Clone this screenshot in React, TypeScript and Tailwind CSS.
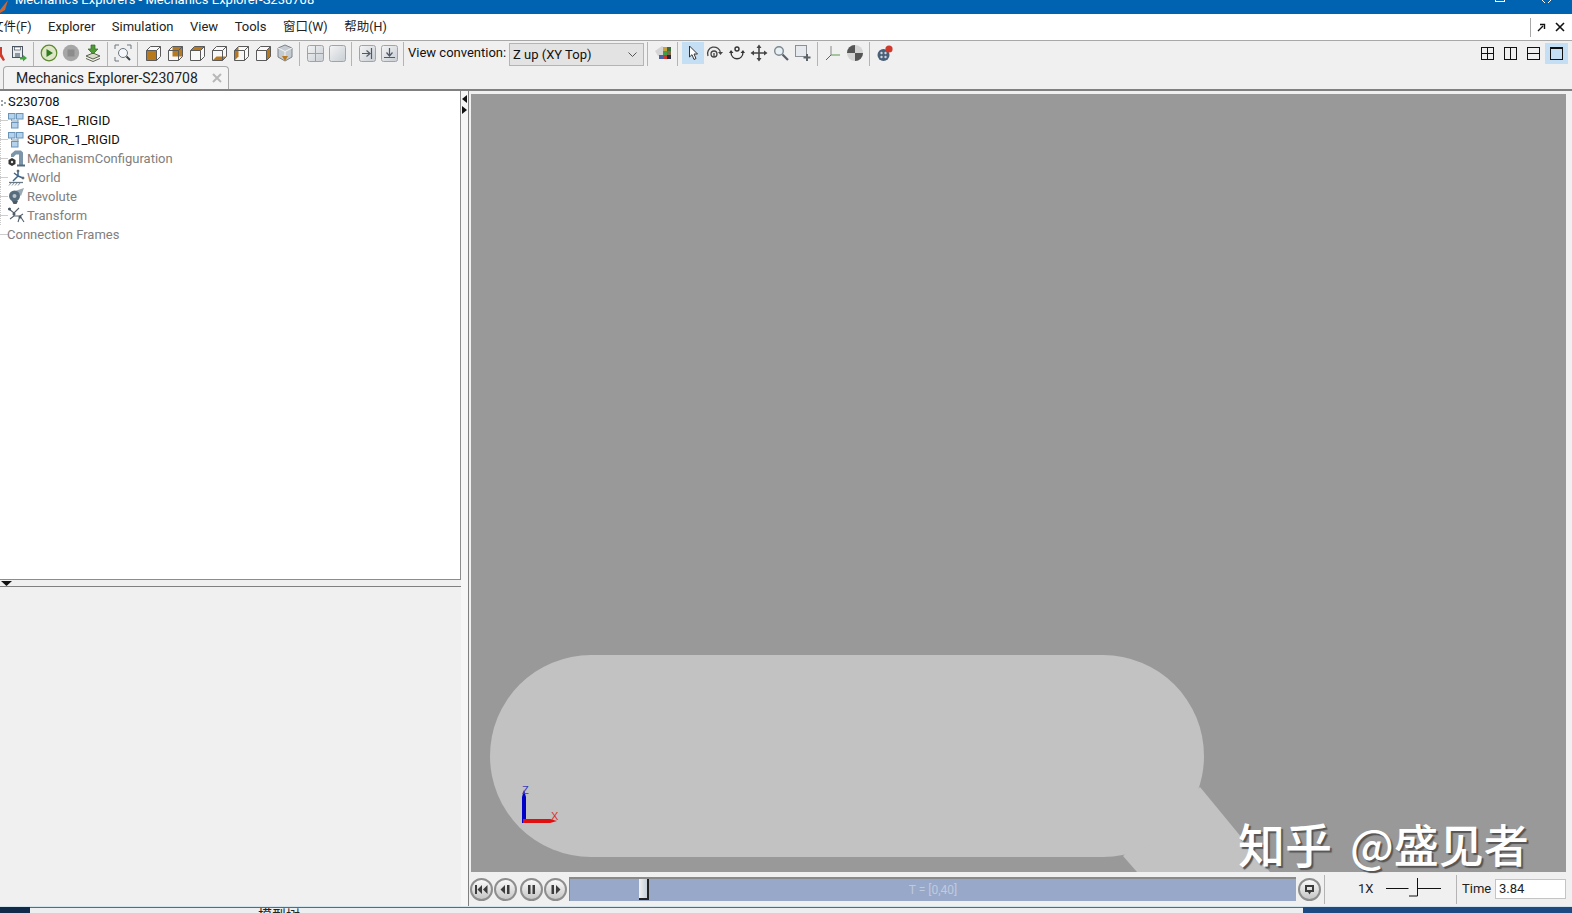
import React from 'react';

const UI_FONT = "font-['Roboto','Noto_Sans_CJK_SC',sans-serif]";

function Sep() {
  return (
    <div className="w-[8px] h-[24px] flex-none pl-[3px]">
      <div className="w-px h-full bg-[#b4b4b4]" />
    </div>
  );
}

function Btn({ children, active }: { children?: React.ReactNode; active?: boolean }) {
  return (
    <div className={`w-[22px] h-[22px] flex-none flex items-center justify-center ${active ? 'bg-[#c4def3]' : ''}`}>
      {children}
    </div>
  );
}

function Cube({ face }: { face: string }) {
  // face: which side of the box is filled brown
  const brown = '#b8791c';
  return (
    <svg width="17" height="17" viewBox="0 0 17 17" fill="none">
      <path d="M1.5 5.5 L5.5 1.5 H15.5 V11.5 L11.5 15.5 H1.5 Z" fill="#f8f8f8" />
      {face === 'front' && <path d="M1.5 5.5 H11.5 V15.5 H1.5 Z" fill={brown} />}
      {face === 'back' && <path d="M5.5 1.5 H15.5 V11.5 H5.5 Z" fill={brown} />}
      {face === 'top' && <path d="M1.5 5.5 L5.5 1.5 H15.5 L11.5 5.5 Z" fill={brown} />}
      {face === 'bottom' && <path d="M1.5 15.5 L5.5 11.5 H15.5 L11.5 15.5 Z" fill={brown} />}
      {face === 'left' && <path d="M1.5 5.5 L5.5 1.5 V11.5 L1.5 15.5 Z" fill={brown} />}
      {face === 'right' && <path d="M11.5 5.5 L15.5 1.5 V11.5 L11.5 15.5 Z" fill={brown} />}
      <path d="M1.5 5.5 L5.5 1.5 H15.5 V11.5 L11.5 15.5 H1.5 Z M1.5 5.5 H11.5 V15.5 M11.5 5.5 L15.5 1.5" stroke="#5a5a5a" />
    </svg>
  );
}

function PlainSquare({ children }: { children?: React.ReactNode }) {
  return (
    <svg width="17" height="17" viewBox="0 0 17 17" fill="none">
      <defs>
        <linearGradient id="sq" x1="0" y1="0" x2="1" y2="1">
          <stop offset="0" stopColor="#f4f4f4" />
          <stop offset="1" stopColor="#c8ced4" />
        </linearGradient>
      </defs>
      <rect x="0.5" y="0.5" width="16" height="16" rx="2" fill="url(#sq)" stroke="#a0a4a8" />
      {children}
    </svg>
  );
}

function LayoutIcon({ v, h, active }: { v?: boolean; h?: boolean; active?: boolean }) {
  return (
    <div className={`w-[23px] h-[21px] flex items-center justify-center ${active ? 'bg-[#c4def3]' : ''}`}>
      <svg width="13" height="13" viewBox="0 0 13 13" fill="none" stroke="#111" strokeWidth="1">
        <rect x="0.5" y="0.5" width="12" height="12" />
        {active && <path d="M0.5 1.5 H12.5" />}
        {v && <path d="M6.5 0.5 V12.5" />}
        {h && <path d="M0.5 6.5 H12.5" />}
      </svg>
    </div>
  );
}

function RoundBtn({ children, className }: { children: React.ReactNode; className?: string }) {
  return (
    <div className={`w-[23px] h-[23px] flex-none rounded-full border-2 border-[#8e8e8e] bg-gradient-to-b from-[#fafafa] to-[#c6c6c6] flex items-center justify-center ${className ?? ''}`}>
      <svg width="13" height="11" viewBox="0 0 13 11" fill="#3c3c3c">{children}</svg>
    </div>
  );
}

function Connector({ last }: { last?: boolean }) {
  return (
    <svg width="8" height="19" viewBox="0 0 8 19" className="flex-none" fill="none">
      <path d="M0.5 9.5 H8" stroke="#9a9a9a" strokeDasharray="1 1" />
      {!last && <path d="M0.5 0 V19" stroke="#c8c8c8" strokeDasharray="1 1" />}
    </svg>
  );
}

function BodyIcon() {
  return (
    <svg width="18" height="17" viewBox="0 0 18 17" className="flex-none" fill="#b4d2ec" stroke="#6a94b8">
      <path d="M3.5 7 V9 H10 M10 7.5 V11" fill="none" stroke="#8a9aa8" />
      <rect x="0.5" y="1.5" width="6.5" height="5.5" />
      <rect x="8.5" y="1.5" width="6.5" height="5.5" />
      <rect x="3.5" y="10.5" width="6.5" height="5.5" />
    </svg>
  );
}

function RobotIcon() {
  return (
    <svg width="18" height="17" viewBox="0 0 18 17" className="flex-none" fill="none">
      <path d="M3 7 V4 L7 0.5 H13 L15 2.5 V15 H11 V4.5 H8 L5.5 7 Z" fill="#7d95a8" />
      <path d="M9 15.5 H17" stroke="#55697a" strokeWidth="2" />
      <path d="M4 8 L7.5 10 L7.5 14 L4 16 L0.5 14 V10 Z" fill="#333" />
      <circle cx="4" cy="12" r="1.2" fill="#e8e8e8" />
    </svg>
  );
}

function WorldIcon() {
  return (
    <svg width="18" height="17" viewBox="0 0 18 17" className="flex-none" fill="none" stroke="#6a7884">
      <path d="M1 13.5 H15" strokeWidth="1.3" />
      <path d="M1 16.5 L3 14 M4 16.5 L6 14 M7 16.5 L9 14 M10 16.5 L12 14" strokeWidth="0.8" />
      <path d="M5 12 L10 7 V1 M10 7 L15 9 M10 7 L6 4" stroke="#3f6488" strokeWidth="1.5" />
      <circle cx="10" cy="2" r="1" fill="#2d2d2d" />
      <circle cx="15" cy="9" r="1" fill="#2d2d2d" />
    </svg>
  );
}

function RevoluteIcon() {
  return (
    <svg width="18" height="17" viewBox="0 0 18 17" className="flex-none" fill="none">
      <path d="M7 3 L16 0 L13 8 Z" fill="#98a8b4" />
      <circle cx="6.5" cy="8" r="5.5" fill="#566c7c" />
      <circle cx="6.5" cy="8" r="2" fill="#b9c4cc" />
      <path d="M4 13 H10 L8.5 16 H5.5 Z" fill="#4f5a62" />
    </svg>
  );
}

function TransformIcon() {
  return (
    <svg width="18" height="17" viewBox="0 0 18 17" className="flex-none" fill="none" stroke="#52606c" strokeWidth="1.1">
      <path d="M1 2 L6 6 L11 1 M6 6 V9 L2 12 M6 9 H12 L15 7 M12 9 L10 15 M12 9 L16 15" />
      <circle cx="1.5" cy="2" r="1" fill="#222" />
      <circle cx="6" cy="7" r="1" fill="#222" />
      <circle cx="12" cy="10" r="1" fill="#222" />
    </svg>
  );
}

const treeRows = [
  { name: 'BASE_1_RIGID', icon: <BodyIcon />, dim: false },
  { name: 'SUPOR_1_RIGID', icon: <BodyIcon />, dim: false },
  { name: 'MechanismConfiguration', icon: <RobotIcon />, dim: true },
  { name: 'World', icon: <WorldIcon />, dim: true },
  { name: 'Revolute', icon: <RevoluteIcon />, dim: true },
  { name: 'Transform', icon: <TransformIcon />, dim: true },
];

function Toolbar() {
  return (
    <div className="h-[25px] flex-none flex bg-[#f0f0f0] pt-[1px] overflow-hidden">
      <div className="flex items-start -ml-[14px]">
        <Btn>
          <svg width="18" height="18" viewBox="0 0 18 18" fill="none">
            <path d="M6 3 H14 V10 L17 16 L15 17 L11 11" fill="#d03a2a" />
          </svg>
        </Btn>
        <Btn>
          <svg width="17" height="17" viewBox="0 0 17 17" fill="none">
            <rect x="1.5" y="1.5" width="10" height="11" fill="#e8ecef" stroke="#4a5560" />
            <rect x="3.5" y="2" width="6" height="3" fill="#fff" stroke="#4a5560" strokeWidth="0.7" />
            <rect x="4" y="8" width="5" height="4" fill="#8c98a2" />
            <path d="M9 12 H12 V10 L16 13 L12 16.5 V14.5 H9 Z" fill="#3fa43f" />
          </svg>
        </Btn>
        <Sep />
        <Btn>
          <svg width="18" height="18" viewBox="0 0 18 18">
            <circle cx="9" cy="9" r="7.8" fill="#dfe6c8" stroke="#5c8a2c" strokeWidth="1.2" />
            <path d="M6.5 5 L13 9 L6.5 13 Z" fill="#2f7d1f" />
          </svg>
        </Btn>
        <Btn>
          <svg width="18" height="18" viewBox="0 0 18 18">
            <circle cx="9" cy="9" r="8.2" fill="#a6a6a6" />
            <rect x="5.5" y="5.5" width="7" height="7" fill="#8c8c8c" />
          </svg>
        </Btn>
        <Btn>
          <svg width="18" height="18" viewBox="0 0 18 18" fill="none">
            <path d="M2 12 L9 9 L16 12 L9 15 Z" fill="#d8dcc8" stroke="#5b6350" />
            <path d="M2 14.5 L9 17.5 L16 14.5" stroke="#5b6350" />
            <path d="M7 1 H11 V5 H14 L9 10 L4 5 H7 Z" fill="#4f9a35" stroke="#2f6a20" strokeWidth="0.7" />
          </svg>
        </Btn>
        <Sep />
        <Btn>
          <svg width="18" height="18" viewBox="0 0 18 18" fill="none" stroke="#6c7680">
            <circle cx="9" cy="9" r="4.5" fill="#f4f8fa" />
            <path d="M12.5 12.5 L16 16" strokeWidth="2" stroke="#3c444c" />
            <path d="M1 5 V1 H5 M13 1 H17 V5 M1 13 V17 H5" />
          </svg>
        </Btn>
        <Sep />
        <Btn><Cube face="front" /></Btn>
        <Btn><Cube face="back" /></Btn>
        <Btn><Cube face="top" /></Btn>
        <Btn><Cube face="bottom" /></Btn>
        <Btn><Cube face="left" /></Btn>
        <Btn><Cube face="right" /></Btn>
        <Btn>
          <svg width="18" height="18" viewBox="0 0 18 18" fill="none">
            <path d="M2 4 L9 1 L16 4 V13 L9 17 L2 13 Z" fill="#c4ccd2" stroke="#7c8288" />
            <path d="M2 4 L9 7.5 L16 4 M9 7.5 V12" stroke="#f4f4f4" />
            <path d="M6 12 H12 L9 17 Z" fill="#b8791c" />
          </svg>
        </Btn>
        <Sep />
        <Btn>
          <PlainSquare>
            <path d="M8.5 0.5 V16.5 M0.5 8.5 H16.5" stroke="#9aa0a6" />
          </PlainSquare>
        </Btn>
        <Btn><PlainSquare /></Btn>
        <Sep />
        <Btn>
          <PlainSquare>
            <path d="M3 8.5 H10 M7.5 5.5 L11 8.5 L7.5 11.5 M12.5 3 V14" stroke="#505a64" strokeWidth="1.2" fill="none" />
          </PlainSquare>
        </Btn>
        <Btn>
          <PlainSquare>
            <path d="M8.5 3 V10 M5.5 7.5 L8.5 11 L11.5 7.5 M3 12.5 H14" stroke="#505a64" strokeWidth="1.2" fill="none" />
          </PlainSquare>
        </Btn>
        <Sep />
        <span className="text-[13px] leading-[22px] text-[#111] whitespace-nowrap w-[101px] flex-none">View convention:</span>
        <div className="w-[135px] h-[23px] flex-none mt-[1px] border border-[#b4b4b4] bg-[#e3e3e3] flex items-center justify-between pl-[3px] pr-[6px]">
          <span className="text-[13px] text-[#111] whitespace-nowrap">Z up (XY Top)</span>
          <svg width="9" height="6" viewBox="0 0 9 6" fill="none" stroke="#555"><path d="M0.5 0.5 L4.5 4.5 L8.5 0.5" /></svg>
        </div>
        <Sep />
        <Btn>
          <svg width="18" height="18" viewBox="0 0 18 18">
            <path d="M1 7 L8 2 L11 4 V11 L4 12 Z" fill="#d4d4d4" />
            <rect x="9" y="3" width="4" height="4" fill="#c9a23c" />
            <rect x="13" y="3" width="4" height="4" fill="#3c6e3c" />
            <rect x="9" y="7" width="4" height="4" fill="#3f9e46" />
            <rect x="13" y="7" width="4" height="4" fill="#7a6a4a" />
            <rect x="9" y="11" width="4" height="4" fill="#c8382e" />
            <rect x="13" y="11" width="4" height="4" fill="#2a2a3a" />
            <rect x="5" y="11" width="4" height="4" fill="#4a62a8" />
          </svg>
        </Btn>
        <Sep />
        <Btn active>
          <svg width="14" height="16" viewBox="0 0 14 16" fill="#fff" stroke="#333">
            <path d="M3.5 1 V12 L6 9.7 L8 14.5 L10 13.5 L8 9 H11.5 Z" />
          </svg>
        </Btn>
        <Btn>
          <svg width="18" height="16" viewBox="0 0 18 16" fill="none" stroke="#444" strokeWidth="1.3">
            <path d="M2 11 A6.5 6.5 0 1 1 14.5 8" />
            <path d="M12 7 L14.5 10 L17 7" fill="#444" stroke="none" />
            <circle cx="8" cy="9" r="3" />
            <path d="M8 8 V12" />
          </svg>
        </Btn>
        <Btn>
          <svg width="18" height="16" viewBox="0 0 18 16" fill="none" stroke="#333" strokeWidth="1.4">
            <path d="M3 7 C3 16 15 16 15 7" />
            <path d="M1 8 L3 5 L5.5 8 M12.5 8 L15 5 L17 8" fill="#333" stroke="none" />
            <circle cx="9" cy="4" r="2" />
          </svg>
        </Btn>
        <Btn>
          <svg width="18" height="18" viewBox="0 0 18 18" fill="#444" stroke="#444">
            <path d="M9 3 V15 M3 9 H15" strokeWidth="1.6" />
            <path d="M9 0.5 L11.5 4 H6.5 Z M9 17.5 L11.5 14 H6.5 Z M0.5 9 L4 6.5 V11.5 Z M17.5 9 L14 6.5 V11.5 Z" stroke="none" />
          </svg>
        </Btn>
        <Btn>
          <svg width="16" height="16" viewBox="0 0 16 16" fill="none">
            <circle cx="6" cy="6" r="4.3" fill="#e8f0f4" stroke="#7c8890" strokeWidth="1.4" />
            <path d="M9.5 9.5 L15 15" stroke="#5a6068" strokeWidth="2.2" />
          </svg>
        </Btn>
        <Btn>
          <svg width="18" height="18" viewBox="0 0 18 18" fill="none">
            <rect x="1.5" y="1.5" width="11" height="11" fill="#e6eaee" stroke="#8a9096" />
            <path d="M13 10 V17 M9.5 13.5 H16.5" stroke="#5c6268" strokeWidth="2" />
          </svg>
        </Btn>
        <Sep />
        <Btn>
          <svg width="18" height="18" viewBox="0 0 18 18" fill="none">
            <path d="M7 2 V11" stroke="#888" />
            <path d="M7 11 H16" stroke="#5c9a4a" />
            <path d="M7 11 L2 16" stroke="#c8382e" />
          </svg>
        </Btn>
        <Btn>
          <svg width="18" height="18" viewBox="0 0 18 18">
            <circle cx="9" cy="9" r="8" fill="#d4d4d4" />
            <path d="M9 1 A8 8 0 0 0 1 9 H9 Z" fill="#555" />
            <path d="M9 9 H17 A8 8 0 0 1 9 17 Z" fill="#555" />
          </svg>
        </Btn>
        <Sep />
        <Btn>
          <svg width="18" height="18" viewBox="0 0 18 18">
            <circle cx="7.5" cy="11" r="6" fill="#4a5f78" />
            <circle cx="5.5" cy="9" r="1.2" fill="#cdd5dd" />
            <circle cx="9.5" cy="9" r="1.2" fill="#cdd5dd" />
            <circle cx="5.5" cy="13" r="1.2" fill="#cdd5dd" />
            <circle cx="9.5" cy="13" r="1.2" fill="#cdd5dd" />
            <circle cx="13" cy="5" r="3.6" fill="#cf3a2c" />
          </svg>
        </Btn>
      </div>
      <div className="ml-auto flex items-start pr-[4px] pt-[1px]">
        <LayoutIcon v h />
        <LayoutIcon v />
        <LayoutIcon h />
        <LayoutIcon active />
      </div>
    </div>
  );
}

function Tree() {
  return (
    <div className="h-[489px] flex-none bg-white border-r border-b border-[#8c8c8c] pt-[1px] overflow-hidden text-[13px] leading-[19px]">
      <div className="h-[19px] flex items-center">
        <svg width="8" height="19" viewBox="0 0 8 19" className="flex-none" fill="#9aa4ac">
          <rect x="1" y="8" width="2" height="2" />
          <rect x="1" y="12" width="2" height="2" />
          <rect x="4" y="10" width="2" height="2" />
        </svg>
        <span className="text-[#111]">S230708</span>
      </div>
      {treeRows.map(row => (
        <div key={row.name} className="h-[19px] flex items-center">
          <Connector />
          <div className="w-[19px] flex-none">{row.icon}</div>
          <span className={row.dim ? 'text-[#808080]' : 'text-[#111]'}>{row.name}</span>
        </div>
      ))}
      <div className="h-[19px] flex items-center">
        <Connector last />
        <span className="text-[#808080] -ml-px">Connection Frames</span>
      </div>
    </div>
  );
}

function Viewport() {
  return (
    <div className="relative flex-1 bg-[#999999]">
      {/* model silhouette + triad, viewport coords */}
      <svg width="1095" height="778" viewBox="0 0 1095 778" className="block">
        <path d="M729 693 L799 778 H666 L652 762 Z" fill="#c2c2c2" />
        <rect x="19" y="561" width="714" height="202" rx="101" fill="#c2c2c2" />
        <rect x="51" y="703" width="4" height="26" fill="#0000c8" />
        <path d="M51 703 L53 696 L55 703 Z" fill="#0000c8" />
        <rect x="52" y="725" width="27" height="4" fill="#e01010" />
        <path d="M79 725 L86 727 L79 729 Z" fill="#e01010" />
        <text x="51" y="700" fontSize="11" fill="#3a3ab8" fontFamily="Liberation Sans">Z</text>
        <text x="80" y="726" fontSize="11" fill="#d83030" fontFamily="Liberation Sans">X</text>
      </svg>
      <div className="absolute left-[767px] top-[723px] leading-[52px] font-medium text-white whitespace-nowrap font-['Noto_Sans_CJK_SC',sans-serif] [text-shadow:2px_2px_1px_#555]">
        <span className="text-[47px]">知乎</span>
        <span className="text-[45px] ml-[18px]">@盛见者</span>
      </div>
    </div>
  );
}

function PlaybackBar() {
  return (
    <div className="h-[34px] flex-none flex items-center bg-[#f0f0f0]">
      <div className="flex items-center gap-[1px] ml-[-1px] mt-[1px]">
        <RoundBtn><path d="M0 1 H2 V10 H0 Z M7 1 V10 L2.5 5.5 Z M12.5 1 V10 L8 5.5 Z" /></RoundBtn>
        <RoundBtn><path d="M6 1 V10 L1.5 5.5 Z M8 1 H10.5 V10 H8 Z" /></RoundBtn>
        <RoundBtn className="ml-[2px]"><path d="M3 1 H5.5 V10 H3 Z M7.5 1 H10 V10 H7.5 Z" /></RoundBtn>
        <RoundBtn><path d="M2.5 1 H5 V10 H2.5 Z M7 1 L11.5 5.5 L7 10 Z" /></RoundBtn>
      </div>
      <div className="relative w-[736px] h-[24px] ml-[2px] bg-[#98a8c8] border-t-2 border-l border-[#8a8a8a] flex items-center justify-center text-[12px] text-[#c0cadf]">
        T = [0,40]
        <div className="absolute left-[69px] top-0 w-[10px] h-[21px] bg-gradient-to-r from-[#f0f0f0] to-[#c8d0dc] border-r-2 border-b-2 border-[#222]" />
      </div>
      <RoundBtn className="ml-[2px]">
        <path d="M2 1 H11 V8 H8 L6.5 10.5 L5 8 H2 Z M4 3 V6 H9 V3 Z" />
      </RoundBtn>
      <div className="w-px h-[29px] bg-[#b4b4b4] ml-[3px]" />
      <span className="text-[13px] text-[#222] ml-[33px] w-[28px] flex-none">1X</span>
      <svg width="55" height="24" viewBox="0 0 55 24" fill="none" className="flex-none">
        <path d="M0 11.5 H55" stroke="#111" />
        <rect x="22.5" y="3.5" width="9" height="15" fill="#f0f0f0" />
        <path d="M31.5 1 V19 H23" stroke="#111" />
      </svg>
      <div className="w-px h-[29px] bg-[#b4b4b4] ml-[15px]" />
      <span className="text-[13px] text-[#222] ml-[5px] w-[33px] flex-none">Time</span>
      <div className="w-[71px] h-[20px] flex-none border border-[#c4c4c4] bg-white text-[13px] leading-[18px] pl-[3px] text-[#222]">3.84</div>
    </div>
  );
}

export default function App() {
  return (
    <div className={`w-[1572px] h-[913px] overflow-hidden flex flex-col bg-[#f0f0f0] ${UI_FONT}`}>
      {/* title bar, cut off by the top of the screen */}
      <div className="h-[14px] flex-none bg-[#0063b1] overflow-hidden flex text-white">
        <svg width="9" height="14" viewBox="0 0 9 14" className="flex-none">
          <path d="M0 10 L8 0 L5 10 L0 13 Z" fill="#d2652c" />
        </svg>
        <span className="ml-[6px] -mt-[10px] text-[13px] leading-[20px] whitespace-nowrap">Mechanics Explorers - Mechanics Explorer-S230708</span>
        <div className="ml-auto flex items-start pr-[20px] gap-[36px]">
          <div className="w-[10px] h-[2px] border-x border-b border-white" />
          <svg width="11" height="4" viewBox="0 0 11 4" fill="none" stroke="#fff"><path d="M1 0 L4 3 M10 0 L7 3" /></svg>
        </div>
      </div>

      <div className="h-[27px] flex-none bg-white border-b border-[#a8a8a8] flex items-center text-[13px] text-[#222]">
        <div className="flex items-center gap-[16.5px] -ml-[9px] whitespace-nowrap">
          <span className="text-[12.5px]">文件(F)</span>
          <span>Explorer</span>
          <span>Simulation</span>
          <span>View</span>
          <span>Tools</span>
          <span className="text-[12.5px]">窗口(W)</span>
          <span className="text-[12.5px]">帮助(H)</span>
        </div>
        <div className="ml-auto flex items-center pr-[7px]">
          <div className="w-px h-[19px] bg-[#a8a8a8]" />
          <svg width="9" height="9" viewBox="0 0 9 9" className="ml-[6px]" fill="none" stroke="#111" strokeWidth="1.4">
            <path d="M1 8 L6 3 M3 1.5 H7.5 V6" />
          </svg>
          <svg width="10" height="10" viewBox="0 0 10 10" className="ml-[9px]" fill="none" stroke="#111" strokeWidth="1.6">
            <path d="M1 1 L9 9 M9 1 L1 9" />
          </svg>
        </div>
      </div>

      <Toolbar />

      <div className="h-[25px] flex-none bg-[#f0f0f0] flex items-end pl-[3px] border-b-2 border-[#808080]">
        <div className="w-[226px] h-[23px] bg-[#f4f4f4] border border-b-0 border-[#a8a8a8] rounded-t-[4px] flex items-center pl-[12px] pr-[6px]">
          <span className="text-[14px] text-[#222] whitespace-nowrap">Mechanics Explorer-S230708</span>
          <svg width="10" height="10" viewBox="0 0 10 10" className="ml-auto" fill="none" stroke="#b8b8b8" strokeWidth="2">
            <path d="M1 1 L9 9 M9 1 L1 9" />
          </svg>
        </div>
      </div>

      <div className="flex-1 min-h-0 flex">
        <div className="w-[461px] flex-none flex flex-col">
          <Tree />
          <div className="h-[7px] flex-none border-b border-[#808080] pl-[1px] pt-[1px]">
            <svg width="11" height="5" viewBox="0 0 11 5" className="block"><path d="M0 0 H11 L5.5 5 Z" fill="#111" /></svg>
          </div>
          <div className="flex-1" />
        </div>
        <div className="w-[7px] flex-none bg-[#f6f6f6] pl-[1px] pt-[4px] flex flex-col gap-[3px]">
          <svg width="5" height="8" viewBox="0 0 5 8"><path d="M5 0 V8 L0 4 Z" fill="#111" /></svg>
          <svg width="5" height="8" viewBox="0 0 5 8"><path d="M0 0 V8 L5 4 Z" fill="#111" /></svg>
        </div>
        <div className="flex-1 min-w-0 flex flex-col border-l border-[#808080] pl-[2px] pr-[6px] pt-[3px]">
          <Viewport />
          <PlaybackBar />
        </div>
      </div>

      {/* bit of the window underneath */}
      <div className="h-[7px] flex-none border-t border-[#d4e4ec] flex bg-[#eceef0]">
        <div className="w-[30px] bg-[#122a4a]" />
        <div className="flex-1 border-t border-[#5a6a7a] overflow-hidden pl-[228px]">
          <span className="block text-[14px] leading-[16px] text-[#222] -mt-[1px]">模型树</span>
        </div>
        <div className="w-[269px] bg-[#1d4a80]" />
      </div>
    </div>
  );
}
